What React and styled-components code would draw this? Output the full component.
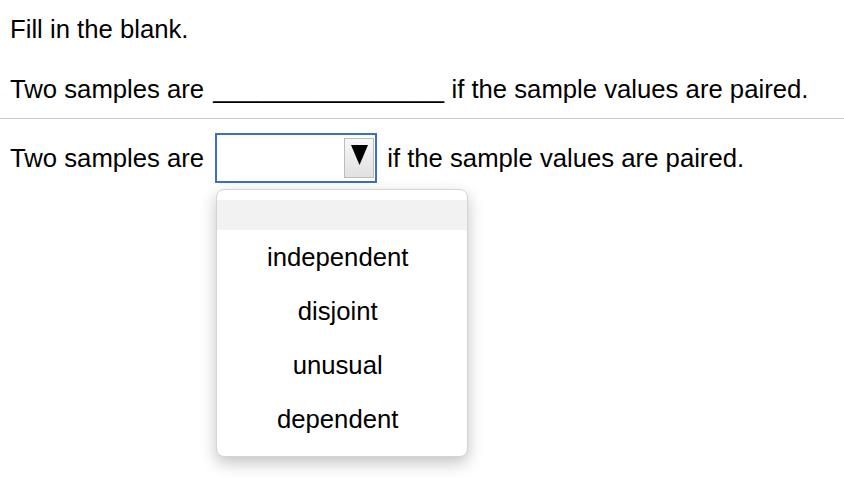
import React from 'react';
import styled, { createGlobalStyle } from 'styled-components';

const GlobalStyle = createGlobalStyle`
  body {
    margin: 0;
    background: #ffffff;
    font-family: "Liberation Sans", Arial, sans-serif;
    color: #000;
  }
`;

const options = ['independent', 'disjoint', 'unusual', 'dependent'];

const App = () => {
  return (
    <Page>
      <GlobalStyle />
      <Prompt>Fill in the blank.</Prompt>
      <Statement>
        Two samples are <Blank>________________</Blank> if the sample values are paired.
      </Statement>
      <Divider />
      <AnswerRow>
        <span>Two samples are</span>
        <SelectWrap>
          <SelectBox>
            <ArrowButton>
              <svg width="17" height="20" viewBox="0 0 17 20">
                <path d="M0 0 H17 L8.5 20 Z" fill="#000" />
              </svg>
            </ArrowButton>
          </SelectBox>
          <Menu>
            <MenuItem $empty />
            {options.map((opt) => (
              <MenuItem key={opt}>{opt}</MenuItem>
            ))}
          </Menu>
        </SelectWrap>
        <span>if the sample values are paired.</span>
      </AnswerRow>
    </Page>
  );
};

// Styled Components
const Page = styled.div`
  box-sizing: border-box;
  min-height: 100vh;
  padding: 14px 0 0 10px;
  font-size: 25.7px;
  line-height: 30px;
`;

const Prompt = styled.p`
  margin: 0 0 30px;
`;

const Statement = styled.p`
  margin: 0;
  white-space: nowrap;
`;

const Blank = styled.span`
  margin-left: 2px;
  letter-spacing: 0.15px;
`;

const Divider = styled.hr`
  border: none;
  border-top: 1px solid #c9ccda;
  margin: 14px 0 14px -10px;
`;

const AnswerRow = styled.div`
  display: flex;
  align-items: center;
  white-space: nowrap;
`;

const SelectWrap = styled.div`
  position: relative;
  margin: 0 10px 0 11px;
`;

const SelectBox = styled.div`
  box-sizing: border-box;
  width: 162px;
  height: 50px;
  border: 2px solid #3a6dcc;
  background: #fff;
  display: flex;
  justify-content: flex-end;
  align-items: flex-start;
  padding: 3px 1px 0 0;
`;

const ArrowButton = styled.div`
  box-sizing: border-box;
  width: 30px;
  height: 40px;
  border: 1px solid #bcbcbc;
  background: linear-gradient(#f7f7f7, #e1e1e1);
  display: flex;
  justify-content: center;
  align-items: flex-start;
  padding-top: 6px;
`;

const Menu = styled.div`
  position: absolute;
  z-index: 10;
  top: 56px;
  left: 1px;
  box-sizing: border-box;
  width: 252px;
  padding: 10px 0;
  background: #fff;
  border: 1px solid #d4d4d4;
  border-radius: 8px;
  box-shadow: 0 6px 16px rgba(0, 0, 0, 0.24);
`;

const MenuItem = styled.div`
  height: ${({ $empty }) => ($empty ? '30px' : '54px')};
  background: ${({ $empty }) => ($empty ? '#f2f2f2' : 'transparent')};
  display: flex;
  align-items: center;
  justify-content: center;
  padding-right: 9px;
`;

export default App;
